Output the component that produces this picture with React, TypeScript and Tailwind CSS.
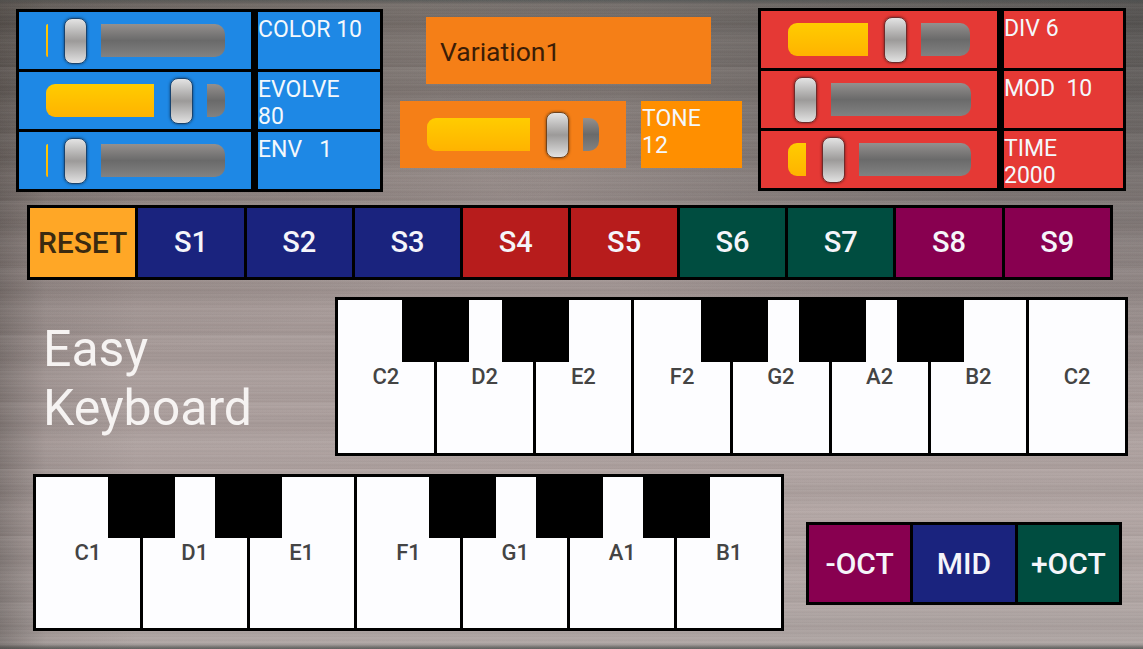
type SliderProps = {
  fill: number;
  rest: number;
  thumbBorder: string;
};

const Slider = ({ fill, rest, thumbBorder }: SliderProps) => {
  return (
    <div className="flex h-full items-center pl-[27px]">
      {fill > 0 && (
        <div
          className="h-[33px] rounded-l-[9px] bg-gradient-to-b from-[#ffcc00] to-[#ffb300]"
          style={{ width: fill }}
        />
      )}
      <div
        className={`h-[46px] w-[23px] shrink-0 rounded-[8px] border bg-gradient-to-b from-[#e4e4e4] via-[#9c9a99] to-[#e2e2e2] shadow-[0_0_3px_rgba(0,0,0,0.55)] ${thumbBorder} ${fill > 0 ? "ml-[16px]" : "ml-[6px]"}`}
      />
      <div
        className="ml-[14px] h-[33px] rounded-r-[10px] bg-gradient-to-b from-[#94908e] via-[#6a6a6a] to-[#828282]"
        style={{ width: rest }}
      />
    </div>
  );
};

const Label = ({ lines }: { lines: string[] }) => {
  return (
    <div className="h-full text-[23px] leading-[27px] whitespace-pre text-[#f4f8fc]">
      {lines.map((line) => (
        <div key={line}>{line}</div>
      ))}
    </div>
  );
};

type PanelRow = { fill: number; rest: number; lines: string[] };

const blueRows: PanelRow[] = [
  { fill: 2, rest: 124, lines: ["COLOR 10"] },
  { fill: 108, rest: 18, lines: ["EVOLVE", "80"] },
  { fill: 2, rest: 124, lines: ["ENV   1"] },
];

const redRows: PanelRow[] = [
  { fill: 80, rest: 49, lines: ["DIV 6"] },
  { fill: 0, rest: 140, lines: ["MOD  10"] },
  { fill: 18, rest: 112, lines: ["TIME", "2000"] },
];

const Panel = ({ rows, red }: { rows: PanelRow[]; red?: boolean }) => {
  return (
    <div
      className={`flex flex-col gap-[3px] border-[3px] border-black bg-black ${red ? "h-[183px] w-[368px]" : "mt-px h-[183px] w-[367px]"}`}
    >
      {rows.map((row) => (
        <div key={row.lines[0]} className="flex h-[57px] gap-[7px]">
          <div className={`h-full ${red ? "w-[236px] bg-[#e53935]" : "w-[232px] bg-[#1e88e5]"}`}>
            <Slider
              fill={row.fill}
              rest={row.rest}
              thumbBorder={red ? "border-[#6e2a2a]" : "border-[#17426e]"}
            />
          </div>
          <div className={`flex-1 pt-[4px] ${red ? "bg-[#e53935]" : "bg-[#1e88e5]"}`}>
            <Label lines={row.lines} />
          </div>
        </div>
      ))}
    </div>
  );
};

const presets = [
  { name: "RESET", bg: "bg-[#ffa726] text-[#3b2a10] text-[30px]" },
  { name: "S1", bg: "bg-[#1a237e] text-[#f5f5fa] text-[29px]" },
  { name: "S2", bg: "bg-[#1a237e] text-[#f5f5fa] text-[29px]" },
  { name: "S3", bg: "bg-[#1a237e] text-[#f5f5fa] text-[29px]" },
  { name: "S4", bg: "bg-[#b71c1c] text-[#f5f5fa] text-[29px]" },
  { name: "S5", bg: "bg-[#b71c1c] text-[#f5f5fa] text-[29px]" },
  { name: "S6", bg: "bg-[#004d40] text-[#f5f5fa] text-[29px]" },
  { name: "S7", bg: "bg-[#004d40] text-[#f5f5fa] text-[29px]" },
  { name: "S8", bg: "bg-[#880050] text-[#f5f5fa] text-[29px]" },
  { name: "S9", bg: "bg-[#880050] text-[#f5f5fa] text-[29px]" },
];

const octaveButtons = [
  { name: "-OCT", bg: "bg-[#880050]" },
  { name: "MID", bg: "bg-[#1a237e]" },
  { name: "+OCT", bg: "bg-[#004d40]" },
];

type KeyboardProps = {
  notes: string[];
  blacks: number[];
  className: string;
  blackHeight: number;
};

const Keyboard = ({ notes, blacks, className, blackHeight }: KeyboardProps) => {
  return (
    <div className={`relative flex gap-[3px] border-[3px] border-black bg-black ${className}`}>
      {notes.map((note, i) => (
        <div
          key={i}
          className="flex flex-1 items-center justify-center bg-[#fdfdff] text-[22px] font-medium text-[#444444]"
        >
          {note}
        </div>
      ))}
      {/* black keys sit over the white ones */}
      {blacks.map((left) => (
        <div
          key={left}
          className="absolute top-[-3px] w-[67px] bg-black"
          style={{ left, height: blackHeight }}
        />
      ))}
    </div>
  );
};

const App = () => {
  return (
    <div className="relative h-[649px] w-[1143px] overflow-hidden bg-[#a29896] font-['Roboto',sans-serif]">
      {/* brushed metal */}
      <div className="absolute inset-0 bg-[repeating-linear-gradient(180deg,rgba(255,255,255,0.04)_0px,rgba(255,255,255,0)_2px,rgba(0,0,0,0.04)_3px,rgba(255,255,255,0.02)_5px,rgba(0,0,0,0.03)_7px),repeating-linear-gradient(180deg,rgba(255,255,255,0.05)_0px,rgba(0,0,0,0.04)_23px,rgba(255,255,255,0.04)_41px,rgba(0,0,0,0.03)_67px),radial-gradient(ellipse_at_100%_0%,rgba(50,52,52,0.55)_0%,rgba(50,52,52,0)_45%),radial-gradient(ellipse_at_0%_0%,rgba(60,55,50,0.4)_0%,rgba(60,55,50,0)_40%),linear-gradient(90deg,rgba(60,55,52,0.4)_0%,rgba(60,55,52,0.1)_4%,rgba(0,0,0,0)_12%),linear-gradient(180deg,#4f5250_0px,#7e7672_4px,#a39694_40%,#b3a6a4_80%,#b0a6a4_643px,#5a5a58_649px)]" />

      <div className="relative">
        {/* top controls */}
        <div className="flex items-start pt-[8px] pl-[16px]">
          <Panel rows={blueRows} />
          <div className="ml-[17px] w-[342px] pt-[9px]">
            <div className="ml-[26px] flex h-[67px] w-[285px] items-center bg-[#f57f17] pt-[3px] pl-[14px] text-[26.5px] text-[#3c1d06]">
              Variation1
            </div>
            <div className="mt-[17px] flex h-[67px]">
              <div className="w-[226px] bg-[#f57f17]">
                <Slider fill={103} rest={16} thumbBorder="border-[#6e4420]" />
              </div>
              <div className="ml-[15px] w-[101px] bg-[#ff8f00] pt-[4px] pl-px">
                <Label lines={["TONE", "12"]} />
              </div>
            </div>
          </div>
          <div className="ml-[16px]">
            <Panel rows={redRows} red />
          </div>
        </div>

        {/* presets */}
        <div className="mt-[13px] ml-[27px] flex h-[75px] w-[1086px] gap-[3px] border-[3px] border-black bg-black">
          {presets.map((preset) => (
            <div
              key={preset.name}
              className={`flex flex-1 items-center justify-center font-medium ${preset.bg}`}
            >
              {preset.name}
            </div>
          ))}
        </div>

        {/* upper keyboard */}
        <div className="mt-[17px] flex h-[159px]">
          <div className="ml-[43px] w-[292px] pt-[23px] text-[50px] leading-[59px] text-[#f6f3f2]">
            <div>Easy</div>
            <div>Keyboard</div>
          </div>
          <Keyboard
            className="h-[159px] w-[793px]"
            notes={["C2", "D2", "E2", "F2", "G2", "A2", "B2", "C2"]}
            blacks={[64, 164, 363, 461, 559]}
            blackHeight={65}
          />
        </div>

        {/* lower keyboard and octave */}
        <div className="mt-[18px] ml-[33px] flex items-start">
          <Keyboard
            className="h-[157px] w-[751px]"
            notes={["C1", "D1", "E1", "F1", "G1", "A1", "B1"]}
            blacks={[72, 179, 393, 500, 607]}
            blackHeight={64}
          />
          <div className="mt-[48px] ml-[22px] flex h-[83px] w-[316px] gap-[3px] border-[3px] border-black bg-black">
            {octaveButtons.map((button) => (
              <div
                key={button.name}
                className={`flex flex-1 items-center justify-center text-[30px] font-medium text-[#f5f5fa] ${button.bg}`}
              >
                {button.name}
              </div>
            ))}
          </div>
        </div>
      </div>
    </div>
  );
};

export default App;
